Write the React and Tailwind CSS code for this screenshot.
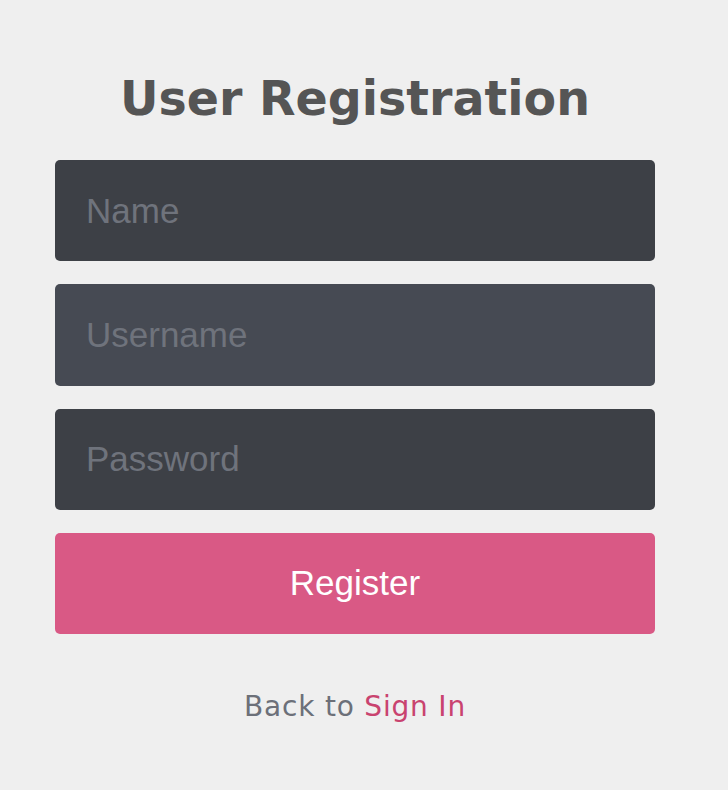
export default function App() {
  return (
    <div className="min-h-[790px] w-full bg-[#efefef]">
      <div className="ml-[55px] w-[600px] pt-[67px] flex flex-col">
        <h1 className="text-center font-['DejaVu_Sans',sans-serif] font-bold text-[47.5px] leading-[64px] text-[#555555]">
          User Registration
        </h1>
        <div className="mt-[29px] flex flex-col gap-[23px]">
          <input
            type="text"
            placeholder="Name"
            className="h-[101.3px] w-full rounded-[5px] bg-[#3d4046] px-[31px] font-['Liberation_Sans',Arial,sans-serif] text-[35px] text-white placeholder:text-[#6f737c] outline-none"
          />
          <input
            type="text"
            placeholder="Username"
            className="h-[101.3px] w-full rounded-[5px] bg-[#464a53] px-[31px] font-['Liberation_Sans',Arial,sans-serif] text-[35px] text-white placeholder:text-[#6f737c] outline-none"
          />
          <input
            type="password"
            placeholder="Password"
            className="h-[101.3px] w-full rounded-[5px] bg-[#3d4046] px-[31px] font-['Liberation_Sans',Arial,sans-serif] text-[35px] text-white placeholder:text-[#6f737c] outline-none"
          />
          <button className="h-[101.3px] w-full rounded-[5px] bg-[#d95985] font-['Liberation_Sans',Arial,sans-serif] text-[35px] text-white">
            Register
          </button>
        </div>
        <p className="mt-[53px] text-center font-['DejaVu_Sans',sans-serif] text-[28px] leading-[40px] tracking-[0.8px] text-[#6c7079]">
          Back to <a className="text-[#c9436f]">Sign In</a>
        </p>
      </div>
    </div>
  );
}
